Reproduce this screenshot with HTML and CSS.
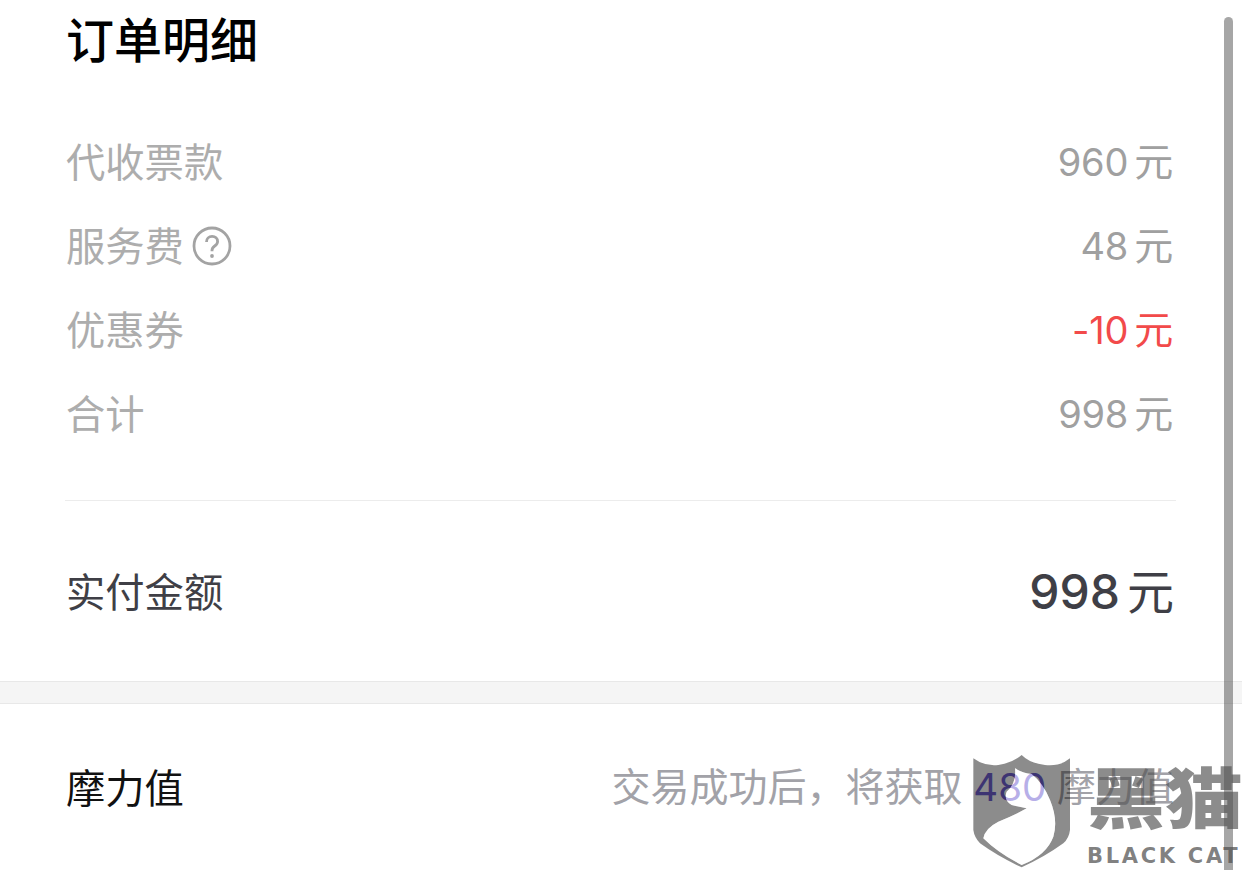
FILE: index.html
```html
<!DOCTYPE html>
<html lang="zh-CN">
<head>
<meta charset="utf-8">
<title>订单明细</title>
<link rel="stylesheet" href="styles.css">
</head>
<body>
<main class="page">
  <section class="order">
    <h1 class="title">订单明细</h1>
    <div class="details">
      <div class="row"><span class="label">代收票款</span><span class="amount">960<i class="unit">元</i></span></div>
      <div class="row"><span class="label">服务费<svg class="help" viewBox="0 0 40 40" width="40" height="40"><circle cx="20" cy="20" r="18" fill="none" stroke="#a3a3a3" stroke-width="2.8"/><path d="M14.500 16c0-3.400 2.400-5.600 5.600-5.600s5.500 2.100 5.500 5c0 2.300-1.300 3.500-2.900 4.600-1.700 1.200-2.700 2.200-2.700 4.400v.8" fill="none" stroke="#a3a3a3" stroke-width="2.800"/><circle cx="20" cy="30" r="1.900" fill="#a3a3a3"/></svg></span><span class="amount">48<i class="unit">元</i></span></div>
      <div class="row"><span class="label">优惠券</span><span class="amount discount">-10<i class="unit">元</i></span></div>
      <div class="row"><span class="label">合计</span><span class="amount">998<i class="unit">元</i></span></div>
    </div>
    <div class="paid">
      <span class="paid-label">实付金额</span><span class="paid-amount">998<i class="unit">元</i></span>
    </div>
  </section>
  <div class="band"></div>
  <section class="points">
    <span class="points-label">摩力值</span>
    <span class="points-note">交易成功后，将获取 <b class="points-num">480</b> 摩力值</span>
  </section>
</main>
<div class="scrollbar"></div>
<div class="watermark">
  <svg class="shield" viewBox="0 0 345 360" width="115" height="120">
    <path fill-rule="evenodd" fill="rgba(0,0,0,.45)" d="M25 25Q60 50 100 45Q140 40 170 15Q195 40 240 45Q285 50 315 25L315 240Q312 265 295 280Q240 320 170 352Q100 320 45 280Q28 262 25 240ZM150 55Q175 70 200 72Q235 100 255 150Q280 210 265 260Q245 315 170 345Q100 310 55 265Q60 235 100 215Q150 195 185 175L140 165Q115 150 125 125Q155 100 150 55Z"/>
    <path fill="rgba(255,255,255,.5)" d="M150 55Q175 70 200 72Q235 100 255 150Q280 210 265 260Q245 315 170 345Q100 310 55 265Q60 235 100 215Q150 195 185 175L140 165Q115 150 125 125Q155 100 150 55Z"/>
  </svg>
  <div class="brand">
    <span class="brand-cn">黑猫</span>
    <span class="brand-en">BLACK CAT</span>
  </div>
</div>
</body>
</html>
```
FILE: styles.css
```css
html, body {
  margin: 0;
  padding: 0;
  height: 870px;
  overflow: hidden;
  background: #fff;
}
body {
  position: relative;
  font-family: "Inter", "Noto Sans CJK SC", sans-serif;
}
.page {
  display: flex;
  flex-direction: column;
  opacity: .999;
}
.order {
  display: flex;
  flex-direction: column;
  padding: 0 66px 0 65px;
  height: 682px;
  box-sizing: border-box;
  border-bottom: 1px solid #e8e8e8;
}
.title {
  margin: 0;
  padding: 13px 0 0 1px;
  font: 500 48px/1 "Noto Sans CJK SC", sans-serif;
  color: #000;
  height: 82px;
  box-sizing: border-box;
}
.details {
  display: flex;
  flex-direction: column;
  padding: 38px 3px 44px 1px;
  border-bottom: 1px solid #ececec;
}
.row {
  display: flex;
  justify-content: space-between;
  align-items: center;
  height: 84px;
}
.label {
  display: flex;
  align-items: center;
  gap: 8px;
  padding-bottom: 4px;
  font: 400 39.300px/1 "Noto Sans CJK SC", sans-serif;
  color: #adadad;
}
.help {
  display: block;
  margin-top: 4px;
}
.amount {
  padding-bottom: 3px;
  font-size: 38px;
  letter-spacing: -.2px;
  line-height: 1;
  color: #a0a0a0;
}
.discount {
  color: #f24a4a;
}
.unit {
  font: 400 39px/1 "Noto Sans CJK SC", sans-serif;
  margin-left: 6px;
}
.paid {
  display: flex;
  justify-content: space-between;
  align-items: center;
  height: 180px;
  padding: 0 2px 0 1px;
}
.paid-label {
  padding-bottom: 3px;
  font: 400 39.300px/1 "Noto Sans CJK SC", sans-serif;
  color: #3f3f46;
}
.paid-amount {
  padding-bottom: 2px;
  font-size: 48px;
  font-weight: 500;
  line-height: 1;
  color: #3f3f46;
}
.paid-amount .unit {
  font-size: 47px;
  margin-left: 7px;
}
.band {
  height: 21px;
  background: #f5f5f5;
  border-bottom: 1px solid #e8e8e8;
}
.points {
  display: flex;
  justify-content: space-between;
  align-items: center;
  padding: 0 68px 3px 66px;
  height: 166px;
  box-sizing: border-box;
}
.points-label {
  font: 400 39.300px/1 "Noto Sans CJK SC", sans-serif;
  color: #111;
}
.points-note {
  font: 400 39px/1 "Noto Sans CJK SC", sans-serif;
  color: #a2a2a8;
  white-space: nowrap;
}
.points-num {
  margin: 0 2px;
  font: 400 38.500px/1 "Inter", sans-serif;
  color: #6f5fd0;
}
.scrollbar {
  position: absolute;
  left: 1224px;
  top: 17px;
  bottom: 0;
  width: 9px;
  border-radius: 5px 5px 0 0;
  background: rgba(70, 70, 70, .48);
}
.watermark {
  position: absolute;
  left: 965px;
  top: 750px;
  display: flex;
  gap: 7px;
  pointer-events: none;
}
.shield {
  display: block;
}
.brand {
  display: flex;
  flex-direction: column;
  align-items: flex-start;
}
.brand-cn {
  display: block;
  height: 88px;
  font: 900 78px/88px "Noto Sans CJK SC", sans-serif;
  color: rgba(80, 80, 80, .66);
  white-space: nowrap;
  transform: scaleY(.85);
  transform-origin: 0 50%;
}
.brand-en {
  margin-top: 5px;
  font: 700 21px/26px "DejaVu Sans", sans-serif;
  letter-spacing: 2.700px;
  color: rgba(80, 80, 80, .72);
  white-space: nowrap;
}
```
